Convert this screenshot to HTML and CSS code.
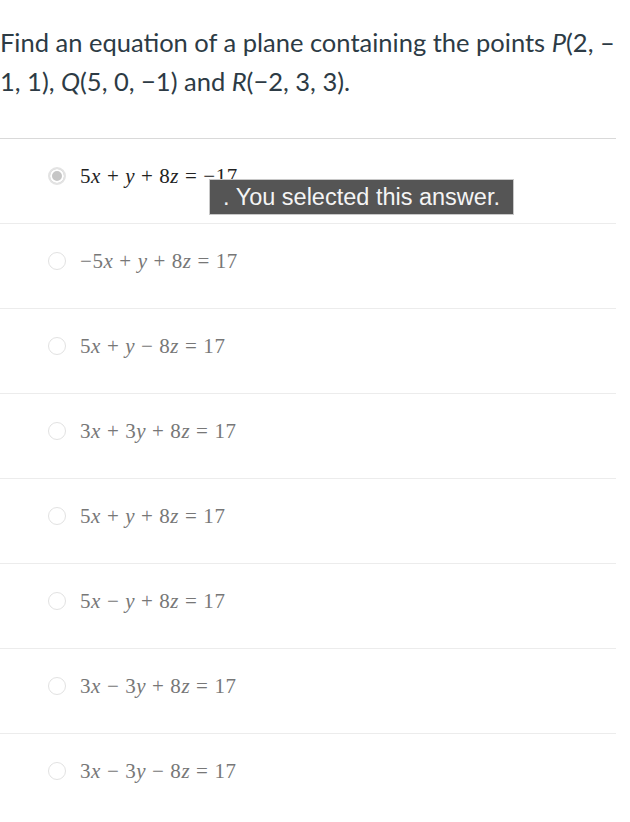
FILE: index.html
```html
<!DOCTYPE html>
<html lang="en-US">
<head>
     <meta charset="UTF-8">
     <meta name="viewport" content="width=device-width, initial-scale=1.0">
     <title>Quiz question</title>
     <link rel="stylesheet" href="styles.css">
</head>
<body>
     <div class="question">
          <p class="question-text">Find an equation of a plane containing the points <i>P</i>(2, &ndash; 1, 1), <i>Q</i>(5, 0, &minus;1) and <i>R</i>(&minus;2, 3, 3).</p>
          <div class="answers">
               <div class="answer selected">
                    <span class="radio"></span>
                    <span class="math">5<i>x</i> + <i>y</i> + 8<i>z</i> = &minus;17</span>
                    <div class="tip">. You selected this answer.</div>
               </div>
               <div class="answer">
                    <span class="radio"></span>
                    <span class="math">&minus;5<i>x</i> + <i>y</i> + 8<i>z</i> = 17</span>
               </div>
               <div class="answer">
                    <span class="radio"></span>
                    <span class="math">5<i>x</i> + <i>y</i> &minus; 8<i>z</i> = 17</span>
               </div>
               <div class="answer">
                    <span class="radio"></span>
                    <span class="math">3<i>x</i> + 3<i>y</i> + 8<i>z</i> = 17</span>
               </div>
               <div class="answer">
                    <span class="radio"></span>
                    <span class="math">5<i>x</i> + <i>y</i> + 8<i>z</i> = 17</span>
               </div>
               <div class="answer">
                    <span class="radio"></span>
                    <span class="math">5<i>x</i> &minus; <i>y</i> + 8<i>z</i> = 17</span>
               </div>
               <div class="answer">
                    <span class="radio"></span>
                    <span class="math">3<i>x</i> &minus; 3<i>y</i> + 8<i>z</i> = 17</span>
               </div>
               <div class="answer">
                    <span class="radio"></span>
                    <span class="math">3<i>x</i> &minus; 3<i>y</i> &minus; 8<i>z</i> = 17</span>
               </div>
          </div>
     </div>
</body>
</html>
```

FILE: styles.css
```css
body {
     margin: 0;
     background: #fff;
}

.question {
     width: 619px;
}

.question-text {
     font-family: Lato, sans-serif;
     font-size: 25.5px;
     line-height: 39px;
     color: #2d3b45;
     margin: 23px 0 37px 0;
}

.answers {
     border-top: 1px solid #d9d9d9;
     width: 616px;
}

.answer {
     position: relative;
     height: 85px;
     border-bottom: 1px solid #ececec;
     display: flex;
     align-items: flex-start;
     padding-top: 24px;
     box-sizing: border-box;
}

.answer:last-child {
     border-bottom: none;
}

.radio {
     width: 18px;
     height: 18px;
     box-sizing: border-box;
     border: 1px solid #e2e2e2;
     border-radius: 50%;
     margin: 4px 0 0 48px;
     background: #fff;
}

.selected .radio {
     border: 2px solid #e3e3e3;
     background: #c6c6c6;
     box-shadow: inset 0 0 0 2px #fff;
}

.math {
     font-family: "Liberation Serif", "DejaVu Serif", serif;
     font-size: 21px;
     letter-spacing: 0.6px;
     color: #777;
     margin-left: 14px;
     line-height: 26px;
}

.math i {
     font-style: italic;
}

.selected .math {
     color: #222;
}

.tip {
     position: absolute;
     left: 209px;
     top: 40px;
     background: #555;
     color: #f4f4f4;
     border: 1px solid #c8c8c8;
     font-family: "Liberation Sans", Arial, sans-serif;
     font-size: 23.5px;
     padding: 4px 13px 4px 13px;
     line-height: 26px;
}
```
